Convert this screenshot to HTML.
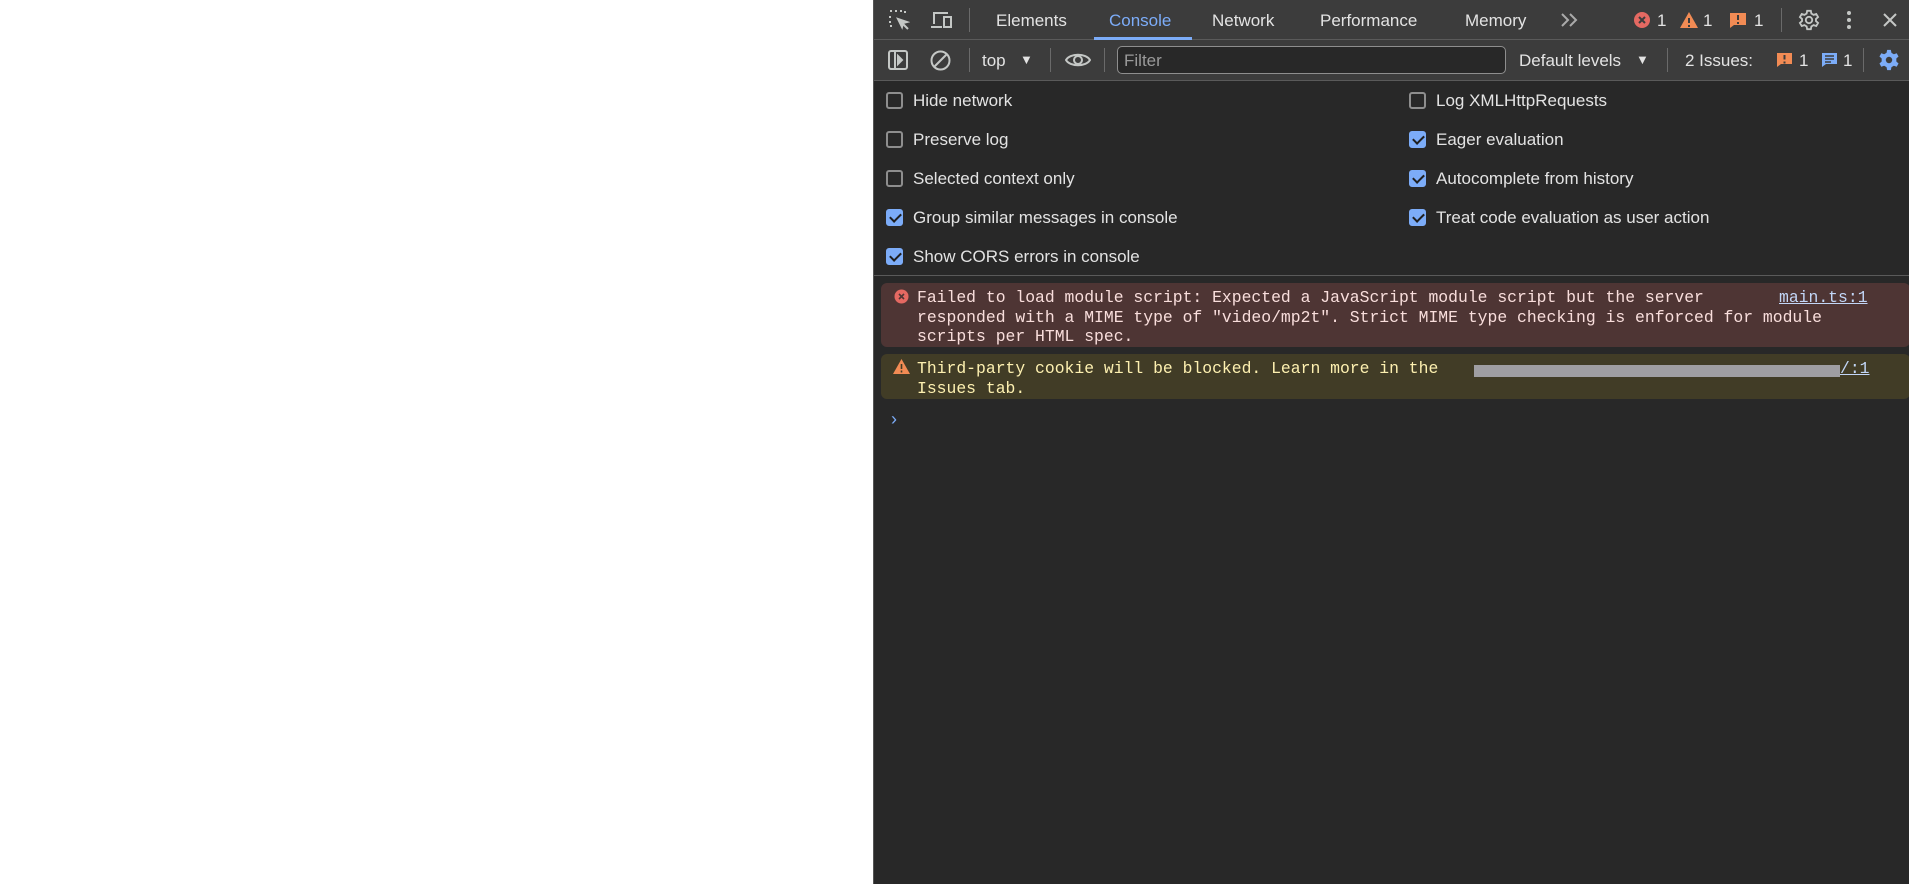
<!DOCTYPE html>
<html><head><meta charset="utf-8"><style>
*{box-sizing:border-box;margin:0;padding:0}
body{width:1909px;height:884px;background:#fff;position:relative;overflow:hidden;font-family:"Liberation Sans",sans-serif}
#dt{position:absolute;left:873px;top:0;width:1036px;height:884px;background:#282828;border-left:1px solid #555}
.bar{position:absolute;left:0;width:1036px;height:40px;background:#3c3c3c;border-bottom:1px solid #5a5a5a;color:#e3e3e3;font-size:17px}
.a{position:absolute;white-space:nowrap}
.sep{position:absolute;width:1px;height:24px;background:#6a6a6a}
.cb{position:absolute;width:17px;height:17px;border:2px solid #8e8e8e;border-radius:3px}
.cb.on{background:#7cacf8;border-color:#7cacf8}
.cb.on:after{content:"";position:absolute;left:4px;top:0px;width:5px;height:9px;border:solid #1f1f1f;border-width:0 2px 2px 0;transform:rotate(45deg)}
.lbl{position:absolute;color:#e3e3e3;font-size:17px;white-space:nowrap}
.mono{font-family:"Liberation Mono",monospace;font-size:16.4px;line-height:19.5px;white-space:pre}
</style></head><body>
<div id="dt">
<div class="bar" style="top:0">
 <svg class="a" style="left:14px;top:9px" width="22" height="22" viewBox="0 0 22 22" fill="none" stroke="#c4c7c5" stroke-width="2"><path d="M2 2h2M7 2h2M12 2h2M2 7v2M2 12v2M2 17h2M17 2v2" stroke-dasharray="2 2"/><path d="M10 10l9 3-4 1-1 4z" fill="#c4c7c5"/><path d="M15 15l5 5"/></svg>
 <svg class="a" style="left:56px;top:10px" width="24" height="20" viewBox="0 0 24 20" fill="none" stroke="#c4c7c5" stroke-width="2"><path d="M4 14V3h14M1 17h11"/><rect x="14" y="7" width="7" height="10"/></svg>
 <div class="sep" style="left:95px;top:8px"></div>
 <span class="a" style="left:122px;top:11px">Elements</span>
 <span class="a" style="left:235px;top:11px;color:#7cacf8">Console</span>
 <div class="a" style="left:220px;top:37px;width:98px;height:3px;background:#7cacf8"></div>
 <span class="a" style="left:338px;top:11px">Network</span>
 <span class="a" style="left:446px;top:11px">Performance</span>
 <span class="a" style="left:591px;top:11px">Memory</span>
 <svg class="a" style="left:686px;top:13px" width="20" height="14" fill="none" stroke="#aaa" stroke-width="2"><path d="M2 1l6 6-6 6M10 1l6 6-6 6"/></svg>
 <svg class="a" style="left:759px;top:11px" width="18" height="18"><circle cx="9" cy="9" r="8" fill="#e46962"/><path d="M6 6l6 6M12 6l-6 6" stroke="#3c3c3c" stroke-width="2"/></svg>
 <span class="a" style="left:783px;top:11px">1</span>
 <svg class="a" style="left:805px;top:11px" width="20" height="18"><path d="M10 1L19 17H1z" fill="#f28b54"/><path d="M10 7v5M10 14v2" stroke="#3c3c3c" stroke-width="2"/></svg>
 <span class="a" style="left:829px;top:11px">1</span>
 <svg class="a" style="left:855px;top:12px" width="18" height="17"><path d="M1 1h16v12H5l-4 3z" fill="#f28b54"/><path d="M9 3v5M9 10v2" stroke="#3c3c3c" stroke-width="2"/></svg>
 <span class="a" style="left:880px;top:11px">1</span>
 <div class="sep" style="left:907px;top:8px"></div>
 <svg class="a" style="left:924px;top:9px" width="22" height="22" viewBox="0 0 24 24" fill="none" stroke="#c4c7c5" stroke-width="2"><circle cx="12" cy="12" r="3.5"/><path d="M10 2h4l.6 3 2.4 1.4 2.9-1 2 3.4-2.3 2v2.4l2.3 2-2 3.4-2.9-1L14.6 19 14 22h-4l-.6-3L7 17.6l-2.9 1-2-3.4 2.3-2v-2.4l-2.3-2 2-3.4 2.9 1L9.4 5z"/></svg>
 <svg class="a" style="left:972px;top:10px" width="6" height="20"><circle cx="3" cy="3" r="2" fill="#c4c7c5"/><circle cx="3" cy="10" r="2" fill="#c4c7c5"/><circle cx="3" cy="17" r="2" fill="#c4c7c5"/></svg>
 <svg class="a" style="left:1008px;top:12px" width="16" height="16"><path d="M2 2l12 12M14 2L2 14" stroke="#c4c7c5" stroke-width="2"/></svg>
</div>
<div class="bar" style="top:40px;height:41px">
 <svg class="a" style="left:14px;top:10px" width="20" height="20" fill="none" stroke="#c4c7c5" stroke-width="2"><rect x="1" y="1" width="18" height="18" rx="2"/><path d="M7 1v18"/><path d="M10 6l4 4-4 4z" fill="#c4c7c5"/></svg>
 <svg class="a" style="left:56px;top:10px" width="21" height="21" fill="none" stroke="#c4c7c5" stroke-width="2"><circle cx="10.5" cy="10.5" r="9"/><path d="M4 17L17 4"/></svg>
 <div class="sep" style="left:95px;top:8px"></div>
 <span class="a" style="left:108px;top:11px">top</span>
 <span class="a" style="left:146px;top:12px;font-size:13px">▼</span>
 <div class="sep" style="left:176px;top:8px"></div>
 <svg class="a" style="left:191px;top:11px" width="26" height="18" fill="none" stroke="#c4c7c5" stroke-width="2"><path d="M1 9C5 2 21 2 25 9 21 16 5 16 1 9z"/><circle cx="13" cy="9" r="4"/></svg>
 <div class="sep" style="left:230px;top:8px"></div>
 <div class="a" style="left:243px;top:6px;width:389px;height:28px;border:1px solid #8e8e8e;border-radius:5px;background:#282828;padding:4px 6px;color:#9a9a9a">Filter</div>
 <span class="a" style="left:645px;top:11px">Default levels</span>
 <span class="a" style="left:762px;top:12px;font-size:13px">▼</span>
 <div class="sep" style="left:793px;top:8px"></div>
 <span class="a" style="left:811px;top:11px">2 Issues:</span>
 <svg class="a" style="left:902px;top:12px" width="17" height="16"><path d="M1 1h15v11H5l-4 3z" fill="#f28b54"/><path d="M8.5 3v4.5M8.5 9.5v2" stroke="#3c3c3c" stroke-width="2"/></svg>
 <span class="a" style="left:925px;top:11px">1</span>
 <svg class="a" style="left:947px;top:12px" width="17" height="16"><path d="M1 1h15v11H5l-4 3z" fill="#7cacf8"/><path d="M4 4h9M4 7h9M4 10h6" stroke="#3c3c3c" stroke-width="1.5"/></svg>
 <span class="a" style="left:969px;top:11px">1</span>
 <div class="sep" style="left:989px;top:8px"></div>
 <svg class="a" style="left:1004px;top:9px" width="22" height="22" viewBox="0 0 24 24"><path fill="#7cacf8" d="M10 1h4l.7 3.2 2.6 1.5 3.1-1 2 3.5-2.4 2.2v3.2l2.4 2.2-2 3.5-3.1-1-2.6 1.5L14 23h-4l-.7-3.2-2.6-1.5-3.1 1-2-3.5 2.4-2.2v-3.2L1.6 8.2l2-3.5 3.1 1 2.6-1.5z"/><circle cx="12" cy="12" r="3.5" fill="#3c3c3c"/></svg>
</div>
<div class="cb" style="left:12px;top:92px"></div><span class="lbl" style="left:39px;top:91px">Hide network</span>
<div class="cb" style="left:12px;top:131px"></div><span class="lbl" style="left:39px;top:130px">Preserve log</span>
<div class="cb" style="left:12px;top:170px"></div><span class="lbl" style="left:39px;top:169px">Selected context only</span>
<div class="cb on" style="left:12px;top:209px"></div><span class="lbl" style="left:39px;top:208px">Group similar messages in console</span>
<div class="cb on" style="left:12px;top:248px"></div><span class="lbl" style="left:39px;top:247px">Show CORS errors in console</span>
<div class="cb" style="left:535px;top:92px"></div><span class="lbl" style="left:562px;top:91px">Log XMLHttpRequests</span>
<div class="cb on" style="left:535px;top:131px"></div><span class="lbl" style="left:562px;top:130px">Eager evaluation</span>
<div class="cb on" style="left:535px;top:170px"></div><span class="lbl" style="left:562px;top:169px">Autocomplete from history</span>
<div class="cb on" style="left:535px;top:209px"></div><span class="lbl" style="left:562px;top:208px">Treat code evaluation as user action</span>
<div class="a" style="left:0;top:275px;width:1036px;height:1px;background:#5a5a5a"></div>
<div class="a" style="left:7px;top:283px;width:1029px;height:64px;background:#4e3534;border-radius:6px"></div>
<svg class="a" style="left:20px;top:289px" width="15" height="15"><circle cx="7.5" cy="7.5" r="7" fill="#e46962"/><path d="M5 5l5 5M10 5l-5 5" stroke="#4e3534" stroke-width="1.6"/></svg>
<div class="a mono" style="left:43px;top:288px;color:#f9dedc">Failed to load module script: Expected a JavaScript module script but the server
responded with a MIME type of "video/mp2t". Strict MIME type checking is enforced for module
scripts per HTML spec.</div>
<span class="a mono" style="left:905px;top:288px;color:#c2d6f7;text-decoration:underline">main.ts:1</span>
<div class="a" style="left:7px;top:354px;width:1029px;height:45px;background:#413c26;border-radius:6px"></div>
<svg class="a" style="left:19px;top:359px" width="17" height="15"><path d="M8.5 0L17 15H0z" fill="#f28b54"/><path d="M8.5 5v5M8.5 11.5v2" stroke="#413c26" stroke-width="1.6"/></svg>
<div class="a mono" style="left:43px;top:359px;color:#fdf0b0">Third-party cookie will be blocked. Learn more in the
Issues tab.</div>
<div class="a" style="left:600px;top:365px;width:366px;height:12px;background:#9f9ea2"></div>
<span class="a mono" style="left:966px;top:359px;color:#c2d6f7;text-decoration:underline">/:1</span>
<span class="a" style="left:17px;top:409px;color:#7cacf8;font-size:18px">›</span>
</div>
</body></html>
